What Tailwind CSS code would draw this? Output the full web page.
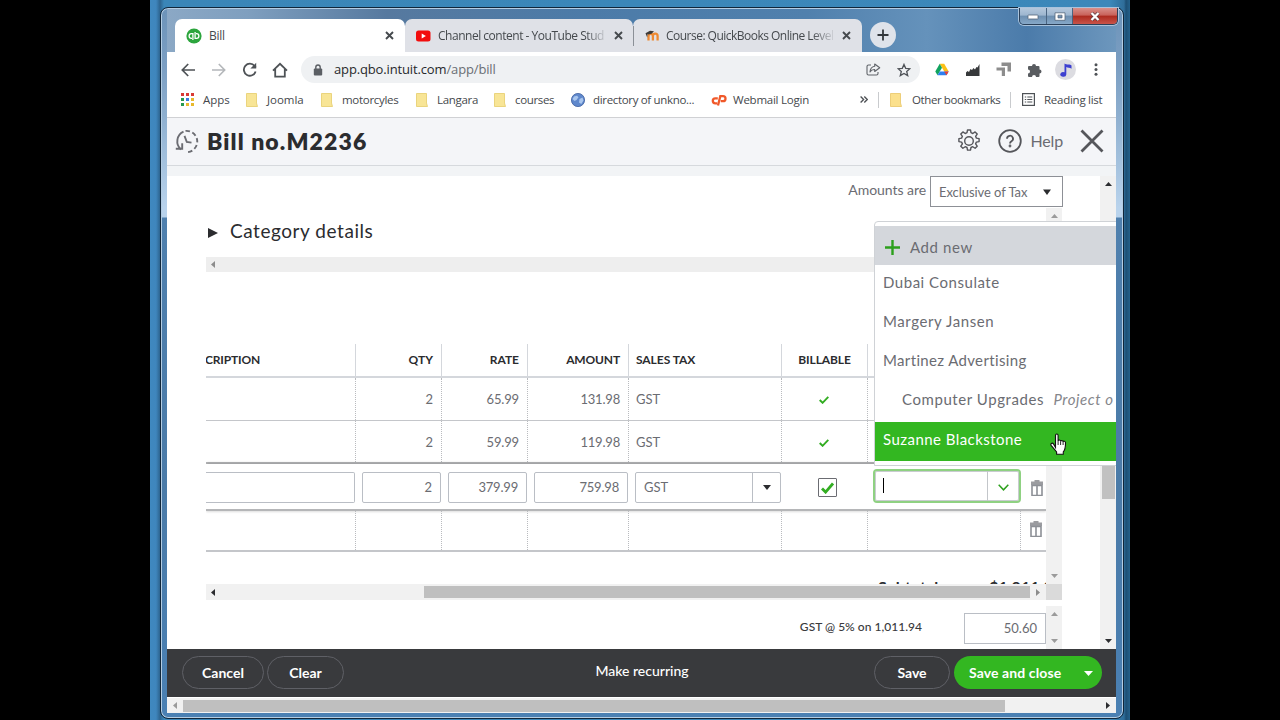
<!DOCTYPE html>
<html lang="en">
<head>
    <meta charset="UTF-8">
    <meta name="viewport" content="width=device-width, initial-scale=1.0">
    <title>Bill</title>
    <script src="https://cdn.jsdelivr.net/npm/@tailwindcss/browser@4"></script>
</head>
<body class="bg-black w-[1280px] h-[720px] overflow-hidden">

<!-- Desktop -->
<div class="w-[980px] h-[720px] mx-auto pt-[7px] pl-[10px] overflow-hidden bg-[linear-gradient(90deg,#3f88bf_0,#3f86bd_6px,#2d648f_10px,#3a86b8_14px,#3c88ba_960px,#2f6d99_974px,#1d4f74_976px,#24618b_980px)]">

    <!-- Browser window -->
    <div class="relative w-[964px] h-[712px] rounded-[8px] border border-[#10263a] bg-[linear-gradient(180deg,#6c93b9_0,#7c9fc3_60px,#8fb0d0_110px,#b9d3ec_200px,#b9d3ec_209px,#4f80ae_210px,#4b7ba8_480px,#4a80b3_100%)] shadow-[inset_0_0_0_1px_#b4cde3] pl-[6px] pr-[7px] pt-px flex flex-col font-['Open_Sans','Noto_Sans',sans-serif] text-[12px]">

        <!-- Window controls -->
        <div class="absolute right-[5px] top-0 flex w-[99px] h-[17px] rounded-b-[5px] border border-t-0 border-[#2b4059] overflow-hidden shadow-[0_0_0_1px_#a9c3dc]">
            <div class="w-[27px] flex items-center justify-center bg-[linear-gradient(180deg,#b4c8dc_0,#9db6cf_45%,#6d8fb0_50%,#86a8c8_100%)] border-r border-[#4a6582]">
                <svg class="w-3 h-2" viewBox="0 0 12 8"><rect x="1" y="3" width="10" height="4" rx=".6" fill="#fff" stroke="#53657a" stroke-width=".8"/></svg>
            </div>
            <div class="w-[26px] flex items-center justify-center bg-[linear-gradient(180deg,#b4c8dc_0,#9db6cf_45%,#6d8fb0_50%,#86a8c8_100%)] border-r border-[#4a6582]">
                <svg class="w-3 h-[9px]" viewBox="0 0 12 9"><path d="M1 .8h10v7.5H1zM4 3.2v2.7h4V3.2z" fill="#fff" fill-rule="evenodd" stroke="#53657a" stroke-width=".8"/></svg>
            </div>
            <div class="flex-1 flex items-center justify-center bg-[linear-gradient(180deg,#d9908a_0,#c9625a_45%,#ad2a1e_50%,#c9544a_100%)]">
                <svg class="w-3 h-[9px]" viewBox="0 0 12 9"><path d="M2.5 1l7 7M9.500 1l-7 7" stroke="#5c3b40" stroke-width="3.600"/><path d="M2.500 1l7 7M9.500 1l-7 7" stroke="#fff" stroke-width="2.300"/></svg>
            </div>
        </div>

        <!-- Tab strip -->
        <div class="h-[43px] shrink-0 flex items-end pl-[8px] text-[#45494d] bg-[linear-gradient(90deg,#8ba8c5_0,#7f9fbf_80px,#56799f_220px,#4c7ba8_420px,#5080ad_640px,#6592bb_760px,#4b7baa_860px,#6d97bd_949px)]">
            <div class="w-[230px] h-[33px] bg-white rounded-t-[7px] flex items-center pl-[11px] pr-[11px]">
                <svg class="w-[16px] h-[16px]" viewBox="0 0 16 16"><circle cx="8" cy="8" r="7.600" fill="#2ca53d"/><g fill="none" stroke="#fff" stroke-width="1.300"><path d="M6.900 5.700H5.400a2.300 2.300 0 0 0 0 4.600h.6M6.900 5.100v7"/><path d="M9.100 10.300h1.500a2.300 2.300 0 0 0 0-4.600H10M9.100 10.900v-7"/></g></svg>
                <span class="ml-[7px] flex-1 tracking-[-0.300px]">Bill</span>
                <svg class="w-[9px] h-[9px]" viewBox="0 0 9 9" stroke="#45494d" stroke-width="1.900"><path d="M1 1l7 7M8 1L1 8"/></svg>
            </div>
            <div class="w-[228px] h-[33px] bg-[#dfe1e7] rounded-t-[7px] flex items-center pl-[11px] pr-[10px]">
                <svg class="w-[15px] h-[12px] shrink-0" viewBox="0 0 15 12"><rect y=".5" width="14.500" height="11" rx="2.500" fill="#f20d0d"/><path d="M5.700 3.500v5l4.200-2.500z" fill="#fff"/></svg>
                <span class="ml-[7px] w-[170px] overflow-hidden whitespace-nowrap tracking-[-0.480px] [mask-image:linear-gradient(90deg,#000_148px,transparent_170px)]">Channel content - YouTube Stud</span>
                <svg class="ml-auto w-[9px] h-[9px] shrink-0" viewBox="0 0 9 9" stroke="#45494d" stroke-width="1.900"><path d="M1 1l7 7M8 1L1 8"/></svg>
            </div>
            <div class="w-[229px] h-[33px] bg-[#dfe1e7] rounded-t-[7px] flex items-center pr-[11px]">
                <div class="w-px h-[20px] bg-[#8b9097]"></div>
                <svg class="ml-[11px] w-[15px] h-[12px] shrink-0" viewBox="0 0 15 12"><path d="M3.500 10.500V6a2.200 2.200 0 0 1 4.400 0v4.500M7.900 6a2.200 2.200 0 0 1 4.700 0v4.500" fill="none" stroke="#ee8a33" stroke-width="2.300"/><path d="M.5 3.200L5 .8l4 .5-2.500 2.500-3 .7-.9-.6-.4 3.600z" fill="#3d3a38"/></svg>
                <span class="ml-[6px] w-[168px] overflow-hidden whitespace-nowrap tracking-[-0.520px] [mask-image:linear-gradient(90deg,#000_146px,transparent_170px)]">Course: QuickBooks Online Level</span>
                <svg class="ml-auto w-[9px] h-[9px] shrink-0" viewBox="0 0 9 9" stroke="#45494d" stroke-width="1.900"><path d="M1 1l7 7M8 1L1 8"/></svg>
            </div>
            <div class="ml-[8px] mb-[4px] w-[26px] h-[26px] rounded-full bg-[#dfe3ea] flex items-center justify-center">
                <svg class="w-[12px] h-[12px]" viewBox="0 0 12 12" stroke="#33373b" stroke-width="1.800"><path d="M6 .5v11M.5 6h11"/></svg>
            </div>
        </div>

        <!-- Toolbar -->
        <div class="h-[35px] shrink-0 bg-white flex items-center pl-[14px] text-[#5f6368]">
            <svg class="w-[14px] h-[14px]" viewBox="0 0 14 14" fill="none" stroke="#4e5256" stroke-width="1.700"><path d="M14 7H1.500M7.200 1L1.300 7l5.900 6"/></svg>
            <svg class="ml-[17px] w-[14px] h-[14px]" viewBox="0 0 14 14" fill="none" stroke="#b4b7ba" stroke-width="1.600"><path d="M0 7h12.500M6.800 1l5.900 6-5.900 6"/></svg>
            <svg class="ml-[16px] w-[16px] h-[16px]" viewBox="0 0 16 16" fill="none" stroke="#4e5256" stroke-width="1.800"><path d="M13.600 9.500A6 6 0 1 1 12.600 4l1.200 1.500"/><path d="M14.200.8v5.800H8.400z" fill="#4e5256" stroke="none"/></svg>
            <svg class="ml-[14px] w-[16px] h-[16px]" viewBox="0 0 16 16" fill="none" stroke="#4e5256" stroke-width="1.800"><path d="M1 8.600L8 1.800l7 6.800M3.200 7v7.600h9.600V7"/></svg>
            <div class="ml-[13px] w-[619px] h-[27px] rounded-full bg-[#eff1f3] flex items-center pl-[12px] pr-[9px]">
                <svg class="w-[10px] h-[12px]" viewBox="0 0 10 12"><rect x=".8" y="4.500" width="8.400" height="7" rx="1" fill="#5b5f64"/><path d="M2.800 5V3.200a2.200 2.200 0 0 1 4.400 0V5" fill="none" stroke="#5b5f64" stroke-width="1.400"/></svg>
                <span class="ml-[11px] text-[13px] tracking-[-0.140px] text-[#6a6e73]"><span class="text-[#27292c]">app.qbo.intuit.com</span>/app/bill</span>
                <svg class="ml-auto w-[15px] h-[13px]" viewBox="0 0 15 13" fill="none" stroke="#5f6368" stroke-width="1.100"><path d="M5 2H2.500A1.500 1.500 0 0 0 1 3.500v7A1.500 1.500 0 0 0 2.500 12h8a1.500 1.500 0 0 0 1.500-1.500V9"/><path d="M8.700 1l5 3.800-5 3.700V6.500C6.500 6.400 5 7.200 4 9c.2-3 1.700-5.400 4.700-5.800z" stroke-linejoin="round"/></svg>
                <svg class="ml-[16px] w-[14px] h-[14px]" viewBox="0 0 14 14" fill="none" stroke="#4f5358" stroke-width="1.300"><path d="M7 1.400l1.700 3.900 4.200.4-3.200 2.800 1 4.100L7 10.400l-3.700 2.200 1-4.100L1.100 5.700l4.200-.4z"/></svg>
            </div>
            <svg class="ml-[15px] w-[14px] h-[13px]" viewBox="0 0 14 13"><path d="M4.700.8h4.500l4.500 7.600H9.300z" fill="#fbc116"/><path d="M4.700.8L.3 8.500l2.200 3.800L7 4.700z" fill="#11a35f"/><path d="M2.500 12.300h9l2.200-3.900H4.800z" fill="#2d7ff0"/><path d="M9.200 8.400h4.500l-2.200 3.900z" fill="#e94335"/></svg>
            <svg class="ml-[17px] w-[14px] h-[12px]" viewBox="0 0 14 12"><path d="M0 12V8.500l1.500-1.500L3 8l1.500-3L6 6l1.500-2L9 5.500 10.500 3l1 .5L13.500 0v12z" fill="#37393b"/></svg>
            <svg class="ml-[16px] w-[16px] h-[15px]" viewBox="0 0 16 15"><path d="M5.500.5H15v9h-3.500V4h-6zM.5 5.500H9V14H5.800V8.600H.5z" fill="#8d8d8d"/></svg>
            <svg class="ml-[15px] w-[15px] h-[14px]" viewBox="0 0 15 14"><path d="M1 4a1 1 0 0 1 1-1h3a2 2 0 1 1 4 0h2.500a1 1 0 0 1 1 1v2.500a2 2 0 1 1 0 4V13a1 1 0 0 1-1 1H9a2 2 0 1 0-4 0H2a1 1 0 0 1-1-1v-2.600a2 2 0 1 0 0-4z" fill="#595c60"/></svg>
            <div class="ml-[13px] w-[21px] h-[21px] rounded-full bg-[#dcdce1] flex items-center justify-center">
                <svg class="w-[12px] h-[14px]" viewBox="0 0 12 14"><path d="M4.500.5c2 1.800 6 .3 7 2v3.200c-1.500-1.400-4-.4-5.200-1.600v7.400a3 2.300 0 1 1-1.800-2.200z" fill="#3c3fd0"/></svg>
            </div>
            <svg class="ml-[18px] w-[4px] h-[13px]" viewBox="0 0 4 13" fill="#4e5256"><circle cx="2" cy="1.700" r="1.500"/><circle cx="2" cy="6.500" r="1.500"/><circle cx="2" cy="11.300" r="1.500"/></svg>
            <div class="flex-1"></div>
        </div>

        <!-- Bookmarks bar -->
        <div class="h-[31px] shrink-0 bg-white border-b border-[#d0d1d4] flex items-center pb-[5px] pl-[14px] text-[11.500px] tracking-[-0.030px] text-[#45484c] whitespace-nowrap">
            <svg class="w-[13px] h-[13px]" viewBox="0 0 13 13"><path d="M0 0h3v3H0zM5 0h3v3H5zM10 0h3v3h-3z" fill="#d93a35"/><path d="M0 5h3v3H0zM0 10h3v3H0z" fill="#279a50"/><path d="M5 5h3v3H5z" fill="#3a7be0"/><path d="M10 5h3v3h-3zM5 10h3v3H5zM10 10h3v3h-3z" fill="#e8b92d"/></svg>
            <span class="ml-[9px] w-[43px]">Apps</span>
            <svg class="w-[12px] h-[14px]" viewBox="0 0 12 14"><path d="M.5.5h10v9.500l1 3.500H.5z" fill="#f8e596" stroke="#e6cc6a" stroke-width=".8"/></svg>
            <span class="ml-[9px] w-[54px]">Joomla</span>
            <svg class="w-[12px] h-[14px]" viewBox="0 0 12 14"><path d="M.5.5h10v9.500l1 3.500H.5z" fill="#f8e596" stroke="#e6cc6a" stroke-width=".8"/></svg>
            <span class="ml-[9px] w-[74px] tracking-[-0.300px]">motorcyles</span>
            <svg class="w-[12px] h-[14px]" viewBox="0 0 12 14"><path d="M.5.5h10v9.500l1 3.500H.5z" fill="#f8e596" stroke="#e6cc6a" stroke-width=".8"/></svg>
            <span class="ml-[9px] w-[57px] tracking-[-0.300px]">Langara</span>
            <svg class="w-[12px] h-[14px]" viewBox="0 0 12 14"><path d="M.5.5h10v9.500l1 3.500H.5z" fill="#f8e596" stroke="#e6cc6a" stroke-width=".8"/></svg>
            <span class="ml-[9px] w-[56px] tracking-[-0.350px]">courses</span>
            <svg class="w-[14px] h-[14px]" viewBox="0 0 14 14"><circle cx="7" cy="7" r="6.600" fill="#5f88cc" stroke="#3d5f9f" stroke-width=".8"/><path d="M3 3.500l3-.8 1.500 1.500-2 2.800L3.500 8 1.500 6zM8.500 6l3-1.500 1 3-2.200 3.500L8 9.500z" fill="#a9c6ee"/></svg>
            <span class="ml-[8px] w-[118px] tracking-[-0.330px]">directory of unkno...</span>
            <svg class="w-[16px] h-[12px]" viewBox="0 0 16 12" fill="none" stroke="#f0592a" stroke-width="2.300"><path d="M6.800 4.300H4.300a2.500 2.500 0 0 0 0 5h2"/><path d="M7 11.500l2.300-9.300h2.700a2.300 2.300 0 0 1 0 5H9.800"/></svg>
            <span class="ml-[6px] w-[127px] tracking-[-0.240px]">Webmail Login</span>
            <svg class="w-[8px] h-[7px]" viewBox="0 0 8 7" fill="none" stroke="#4e5256" stroke-width="1.400"><path d="M.6.500l3 3-3 3M4.300.5l3 3-3 3"/></svg>
            <div class="ml-[10px] w-px h-[16px] bg-[#c9cbce]"></div>
            <svg class="ml-[11px] w-[12px] h-[14px]" viewBox="0 0 12 14"><path d="M.5.5h10v9.500l1 3.500H.5z" fill="#fbe08c" stroke="#e9c566" stroke-width=".8"/></svg>
            <span class="ml-[10px] w-[98px] tracking-[-0.400px]">Other bookmarks</span>
            <div class="w-px h-[16px] bg-[#c9cbce]"></div>
            <svg class="ml-[11px] w-[13px] h-[13px]" viewBox="0 0 13 13" fill="none" stroke="#4e5256"><rect x=".6" y=".6" width="11.800" height="11.800" stroke-width="1.200"/><path d="M2.800 4h1.400M2.800 6.500h1.400M2.800 9h1.400M5.300 4h5M5.300 6.500h5M5.300 9h5" stroke-width="1.100"/></svg>
            <span class="ml-[9px] tracking-[-0.260px]">Reading list</span>
        </div>

        <!-- QuickBooks page -->
        <div class="relative w-[949px] h-[595px] shrink-0 bg-white overflow-hidden font-[Lato,sans-serif] text-[#393a3d]">

            <!-- Bill header -->
            <div class="h-[48px] bg-[#f4f5f8] border-b border-[#d6d9dd] flex items-center pb-px pl-[8px] pr-[12px]">
                <svg class="w-[25px] h-[25px]" viewBox="0 0 25 25" fill="none" stroke="#6b6c72" stroke-width="1.900"><path d="M6 20.500A10.700 10.700 0 0 1 8.500 2.700"/><path d="M.8 19.800h6.400v-5.600"/><path d="M10.500 1.900A10.700 10.700 0 0 1 12.600 23.200" stroke-dasharray="4.500 2.600"/><path d="M9.500 6.800l2.300 6.200 4.700.6"/></svg>
                <h1 class="ml-[7px] flex-1 text-[23px] leading-none font-extrabold tracking-[1.100px] text-[#2b2c2f]">Bill no.M2236</h1>
                <svg class="w-[24px] h-[24px]" viewBox="0 0 24 24" fill="none" stroke="#55565b" stroke-width="1.400" stroke-linejoin="round"><circle cx="12" cy="12" r="4.300"/><path d="M10.500 1h3l.5 2.700 1.800.8 2.300-1.600 2.100 2.200-1.600 2.200.8 1.800 2.700.5v3l-2.700.5-.8 1.800 1.600 2.300-2.100 2.100-2.300-1.600-1.800.8-.5 2.600h-3l-.5-2.600-1.800-.8-2.300 1.600-2.100-2.100 1.600-2.300-.8-1.800-2.700-.5v-3l2.700-.5.8-1.800L3.800 5.100l2.100-2.200 2.300 1.600 1.800-.8z"/></svg>
                <svg class="ml-[17px] w-[24px] h-[24px]" viewBox="0 0 24 24" fill="none" stroke="#55565b" stroke-width="1.800"><circle cx="12" cy="12" r="10.800"/><path d="M9 9.800a3 3 0 1 1 4.500 2.500c-1.100.7-1.500 1.200-1.500 2.200"/><circle cx="12" cy="17" r=".5"/></svg>
                <span class="ml-[8px] text-[16px] tracking-[-0.150px] text-[#6b6c72]">Help</span>
                <svg class="ml-[17px] w-[24px] h-[24px]" viewBox="0 0 24 24" stroke="#55565b" stroke-width="2.800"><path d="M1.500 1.500l21 21M22.500 1.500l-21 21"/></svg>
            </div>
            <div class="h-[10px] bg-[#f2f4f6]"></div>

            <!-- Scrolling area -->
            <div class="h-[473px] flex">
                <div class="w-[933px] pl-[39px]">

                    <div class="w-[857px] h-[32px] flex justify-end text-[14px] leading-none">
                        <span class="pt-[7px] mr-[4px] tracking-[-0.050px] text-[#6b6c72]">Amounts are</span>
                        <div class="w-[133px] h-[31px] border border-[#8d9096] flex items-center justify-between pl-[8px] pr-[11px] pt-px text-[13px] tracking-[-0.060px] text-[#6b6c72]">
                            Exclusive of Tax
                            <svg class="w-[8px] h-[6px]" viewBox="0 0 8 6" fill="#2b2c2f"><path d="M0 .5h8L4 6z"/></svg>
                        </div>
                    </div>

                    <!-- Item area with its own scrollbars -->
                    <div class="flex h-[376px] w-[856px]">
                        <div class="w-[840px] overflow-hidden">
                            <div class="h-[49px] flex items-center">
                                <svg class="ml-[2px] w-[10px] h-[10px]" viewBox="0 0 10 10" fill="#2b2c2f"><path d="M0 0l10 5-10 5z"/></svg>
                                <span class="ml-[12px] pb-[3px] text-[19px] tracking-[0.550px] text-[#2b2c2f]">Category details</span>
                            </div>
                            <div class="h-[15px] bg-[#eeeeee] flex items-center pl-[5px]">
                                <svg class="w-[4px] h-[7px]" viewBox="0 0 4 7" fill="#8c8c8c"><path d="M4 0v7L0 3.500z"/></svg>
                            </div>

                            <!-- Item table -->
                            <div class="mt-[72px] grid grid-cols-[150px_86px_86px_101px_153px_86px_153px_25px] text-[12px] leading-none">
                                <div class="col-span-8 grid grid-cols-subgrid h-[34px] border-b-2 border-[#d4d7dc] font-bold text-[#2b2c2f] *:flex *:items-center *:border-r *:border-[#d4d7dc] *:pb-[1px]">
                                    <div class="-ml-px tracking-[-0.150px]">CRIPTION</div>
                                    <div class="justify-end pr-[8px]">QTY</div>
                                    <div class="justify-end pr-[8px]">RATE</div>
                                    <div class="justify-end pr-[8px] tracking-[-0.150px]">AMOUNT</div>
                                    <div class="pl-[7px] tracking-[-0.060px]">SALES TAX</div>
                                    <div class="justify-center tracking-[-0.100px]">BILLABLE</div>
                                    <div></div>
                                </div>
                                <div class="col-span-8 grid grid-cols-subgrid h-[43px] border-b border-[#c4c6ca] text-[13px] text-[#6b6c72] *:flex *:items-center *:border-r *:border-dotted *:border-[#b9bbbf]">
                                    <div></div>
                                    <div class="justify-end pr-[8px]">2</div>
                                    <div class="justify-end pr-[8px] tracking-[-0.150px]">65.99</div>
                                    <div class="justify-end pr-[8px] tracking-[-0.200px]">131.98</div>
                                    <div class="pl-[7px]">GST</div>
                                    <div class="justify-center pt-[2px] pr-px"><svg class="w-[10px] h-[8px]" viewBox="0 0 10 8" fill="none" stroke="#33ad22" stroke-width="1.900"><path d="M.7 4l2.900 2.800L9.300.9"/></svg></div>
                                    <div></div>
                                </div>
                                <div class="col-span-8 grid grid-cols-subgrid h-[43px] border-b-2 border-[#b5b6b8] text-[13px] text-[#6b6c72] *:flex *:items-center *:border-r *:border-dotted *:border-[#b9bbbf] *:pt-[2px]">
                                    <div></div>
                                    <div class="justify-end pr-[8px]">2</div>
                                    <div class="justify-end pr-[8px] tracking-[-0.150px]">59.99</div>
                                    <div class="justify-end pr-[8px] tracking-[-0.200px]">119.98</div>
                                    <div class="pl-[7px]">GST</div>
                                    <div class="justify-center pr-px"><svg class="w-[10px] h-[8px]" viewBox="0 0 10 8" fill="none" stroke="#33ad22" stroke-width="1.900"><path d="M.7 4l2.900 2.800L9.300.9"/></svg></div>
                                    <div></div>
                                </div>
                                <!-- Row being edited -->
                                <div class="col-span-8 grid grid-cols-subgrid items-center h-[47px] pt-[2px] border-b-2 border-[#b5b6b8] shadow-[0_1px_2px_#00000022,0_-3px_2px_-1px_#00000018] text-[13px] text-[#6b6c72]">
                                    <div class="w-[149px] h-[31px] border border-l-0 border-[#babec5] rounded-r-[2px]"></div>
                                    <div class="ml-[6px] w-[79px] h-[31px] border border-[#babec5] rounded-[2px] flex items-center justify-end pr-[8px]">2</div>
                                    <div class="ml-[6px] w-[79px] h-[31px] border border-[#babec5] rounded-[2px] flex items-center justify-end pr-[8px] tracking-[-0.200px]">379.99</div>
                                    <div class="ml-[6px] w-[94px] h-[31px] border border-[#babec5] rounded-[2px] flex items-center justify-end pr-[8px] tracking-[-0.200px]">759.98</div>
                                    <div class="ml-[6px] w-[146px] h-[31px] border border-[#babec5] rounded-[2px] flex items-center pl-[8px]">
                                        <span class="flex-1">GST</span>
                                        <div class="w-[28px] h-full border-l border-[#babec5] flex items-center justify-center">
                                            <svg class="w-[8px] h-[5px]" viewBox="0 0 8 5" fill="#2b2c2f"><path d="M0 0h8L4 5z"/></svg>
                                        </div>
                                    </div>
                                    <div class="ml-[36px] w-[19px] h-[19px] border border-[#6b6c72] rounded-[1px] flex items-center justify-center">
                                        <svg class="w-[13px] h-[12px]" viewBox="0 0 13 12" fill="none" stroke="#33ad22" stroke-width="2.800"><path d="M1 6.500l3.600 3.600L12 1.500"/></svg>
                                    </div>
                                    <div class="ml-[5px] -mt-[4px] w-[148px] h-[34px] border-2 border-[#8fd182] rounded-[4px] flex items-center shadow-[inset_0_0_0_1px_#c9ccd0] bg-white">
                                        <div class="ml-[8px] w-px h-[15px] bg-black"></div>
                                        <div class="ml-auto w-[32px] h-full border-l border-[#c3c6ca] flex items-center justify-center">
                                            <svg class="mt-[3px] w-[11px] h-[7px]" viewBox="0 0 11 7" fill="none" stroke="#2ca01c" stroke-width="1.500"><path d="M.7.800l4.800 5 4.800-5"/></svg>
                                        </div>
                                    </div>
                                    <div class="pl-[10px]">
                                        <svg class="w-[12px] h-[16px]" viewBox="0 0 12 16"><path d="M3.500 0h5v1.500H12V5H0V1.500h3.500z" fill="#9b9ca0"/><path d="M1 5.500h10v10H1zM6 5.500v10" fill="none" stroke="#8d9096" stroke-width="1.600"/></svg>
                                    </div>
                                </div>
                                <div class="col-span-8 grid grid-cols-subgrid h-[41px] border-b-2 border-[#c4c6ca] *:border-r *:border-dotted *:border-[#b9bbbf]">
                                    <div></div><div></div><div></div><div></div><div></div><div></div><div></div>
                                    <div class="border-r-0! pl-[9px] pt-[10px]">
                                        <svg class="w-[12px] h-[16px]" viewBox="0 0 12 16"><path d="M3.500 0h5v1.500H12V5H0V1.500h3.500z" fill="#9b9ca0"/><path d="M1 5.500h10v10H1zM6 5.500v10" fill="none" stroke="#8d9096" stroke-width="1.600"/></svg>
                                    </div>
                                </div>
                            </div>

                            <!-- Subtotal, cut off by the scroll area -->
                            <div class="h-[34px] pt-[25px] pl-[672px] flex text-[16px] leading-[20px] font-bold tracking-[0.100px] text-[#2b2c2f] overflow-hidden whitespace-nowrap">
                                <span class="w-[111px] shrink-0">Subtotal</span>
                                <span>$1,011.94</span>
                            </div>
                        </div>
                        <div class="w-[16px] bg-[#f1f1f1] flex flex-col items-center justify-between py-[6px]">
                            <svg class="w-[7px] h-[4px]" viewBox="0 0 7 4" fill="#9b9b9b"><path d="M0 4h7L3.500 0z"/></svg>
                            <svg class="w-[7px] h-[4px]" viewBox="0 0 7 4" fill="#9b9b9b"><path d="M0 0h7L3.500 4z"/></svg>
                        </div>
                    </div>

                    <!-- Horizontal scrollbar -->
                    <div class="w-[856px] h-[16px] flex">
                        <div class="flex-1 bg-[#f1f1f1] flex items-center pl-[5px] pr-[6px]">
                            <svg class="w-[4px] h-[7px]" viewBox="0 0 4 7" fill="#2b2c2f"><path d="M4 0v7L0 3.500z"/></svg>
                            <div class="ml-[209px] w-[606px] h-[12px] bg-[#bfbfbf]"></div>
                            <svg class="ml-auto w-[4px] h-[7px]" viewBox="0 0 4 7" fill="#8c8c8c"><path d="M0 0v7l4-3.500z"/></svg>
                        </div>
                        <div class="w-[16px] bg-[#dadada]"></div>
                    </div>

                    <!-- Tax line -->
                    <div class="w-[856px] h-[49px] pt-[6px] flex items-start justify-end text-[13px]">
                        <span class="mt-[12px] mr-[42px] text-[12px] leading-[18px] tracking-[0.020px] text-[#393a3d] font-medium">GST @ 5% on 1,011.94</span>
                        <div class="mt-[7px] w-[82px] h-[31px] border border-[#babec5] flex items-center justify-end pr-[8px] text-[#6b6c72]">50.60</div>
                        <div class="w-[16px] h-[43px] bg-[#f1f1f1] flex flex-col items-center justify-between py-[6px]">
                            <svg class="w-[7px] h-[4px]" viewBox="0 0 7 4" fill="#9b9b9b"><path d="M0 4h7L3.500 0z"/></svg>
                            <svg class="w-[7px] h-[4px]" viewBox="0 0 7 4" fill="#9b9b9b"><path d="M0 0h7L3.500 4z"/></svg>
                        </div>
                    </div>
                </div>

                <!-- Page scrollbar -->
                <div class="flex-1 bg-[#f1f1f1] flex flex-col items-center py-[6px]">
                    <svg class="w-[7px] h-[4px]" viewBox="0 0 7 4" fill="#2b2c2f"><path d="M0 4h7L3.500 0z"/></svg>
                    <div class="mt-[280px] w-[13px] h-[33px] bg-[#c1c1c1]"></div>
                    <svg class="mt-auto w-[7px] h-[4px]" viewBox="0 0 7 4" fill="#2b2c2f"><path d="M0 0h7L3.500 4z"/></svg>
                </div>
            </div>

            <!-- Customer dropdown -->
            <div class="absolute left-[707px] top-[103px] w-[260px] h-[245px] bg-white border border-[#cfd2d6] rounded-tl-[4px] pt-[4px] text-[15px] leading-[24px] tracking-[0.600px] text-[#6b6c72] whitespace-nowrap">
                <div class="h-[39px] bg-[#d4d7dc] flex items-center pt-[4px] pl-[10px]">
                    <svg class="w-[15px] h-[15px]" viewBox="0 0 15 15" stroke="#2ca01c" stroke-width="2.400"><path d="M7.500 0v15M0 7.500h15"/></svg>
                    <span class="ml-[10px] -mt-px">Add new</span>
                </div>
                <div class="h-[39px] pl-[8px] pt-[5px] tracking-[0.530px]">Dubai Consulate</div>
                <div class="h-[39px] pl-[8px] pt-[5px]">Margery Jansen</div>
                <div class="h-[40px] pl-[8px] pt-[5px] tracking-[0.350px]">Martinez Advertising</div>
                <div class="h-[39px] pl-[27px] pt-[4px] tracking-[0.570px]">Computer Upgrades <em class="ml-[5px] text-[#85868b]">Project o</em></div>
                <div class="h-[39px] pl-[8px] pt-[5px] tracking-[0.450px] bg-[#33b721] text-white">Suzanne Blackstone</div>
            </div>

            <!-- Hand pointer -->
            <svg class="absolute left-[883px] top-[315px] w-[17px] h-[22px]" viewBox="0 0 17 22"><path d="M5.500 14.500V2.500c0-2 2.600-2 2.600 0V8c0-1.300 2.400-1.300 2.500.4 0-1.200 2.400-1.100 2.500.4.2-1 2.400-.9 2.400.8 0 3.500.2 6.500-2.200 9.300v2.400H6.600v-2.400L1.300 12.600c-1.300-1.700.8-3.300 2.200-1.700z" fill="#fff" stroke="#111" stroke-width="1.100"/><path d="M8.100 8v4M10.600 8.500V12M13.100 9v3" stroke="#111" stroke-width=".9"/></svg>

            <!-- Footer actions -->
            <div class="h-[48px] bg-[#393a3d] flex items-center pl-[15px] pr-[14px] pb-px text-[14px] text-white font-bold">
                <div class="w-[82px] h-[33px] rounded-full border border-[#5f6066] flex items-center justify-center">Cancel</div>
                <div class="ml-[3px] w-[77px] h-[33px] rounded-full border border-[#5f6066] flex items-center justify-center">Clear</div>
                <div class="flex-1 flex justify-center pl-[86px] pb-[4px] font-medium tracking-[-0.010px]">Make recurring</div>
                <div class="ml-[20px] w-[76px] h-[33px] rounded-full border border-[#5f6066] flex items-center justify-center">Save</div>
                <div class="ml-[4px] w-[148px] h-[33px] rounded-full bg-[#33b721] flex items-center pl-[15px] pr-[9px] justify-between">
                    <span class="tracking-[0.100px]">Save and close</span>
                    <svg class="mt-[2px] w-[9px] h-[5px]" viewBox="0 0 9 5" fill="#fff"><path d="M0 0h9L4.500 5z"/></svg>
                </div>
            </div>

            <!-- Window scrollbar -->
            <div class="h-[16px] bg-[#f1f1f1] border-t border-white flex items-center pl-[6px] pr-[6px]">
                <svg class="w-[4px] h-[7px]" viewBox="0 0 4 7" fill="#9b9b9b"><path d="M4 0v7L0 3.500z"/></svg>
                <div class="ml-[6px] w-[822px] h-[12px] bg-[#bfbfbf]"></div>
                <svg class="ml-auto w-[4px] h-[7px]" viewBox="0 0 4 7" fill="#2b2c2f"><path d="M0 0v7l4-3.500z"/></svg>
            </div>
        </div>
    </div>
</div>

</body>
</html>
